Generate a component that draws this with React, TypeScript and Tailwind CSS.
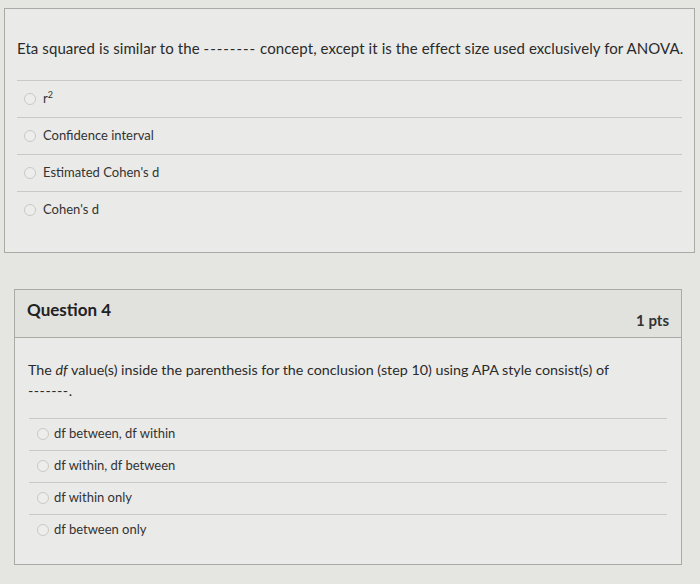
import { ReactNode } from 'react'

const font = { fontFamily: 'Lato, "Open Sans", sans-serif' }

function Radio() {
  return <span className="inline-block h-[12px] w-[12px] shrink-0 rounded-full border border-[#c9c9c6] bg-[#ededeb]" />
}

function Option({ children, row }: { children: ReactNode; row: string }) {
  return (
    <div className={`flex items-center border-t border-[#c9c9c6] ${row}`}>
      <Radio />
      <span className="text-[13px] text-[#333]">{children}</span>
    </div>
  )
}

export default function App() {
  return (
    <div className="h-[584px] w-[700px] overflow-hidden bg-[#e5e5e2] pt-[8px]" style={font}>
      {/* Previous question (card continues above the viewport) */}
      <div className="ml-[4px] w-[691px] border border-[#a9a9a6] bg-[#eaeae8]">
        <div className="whitespace-nowrap px-[12px] pt-[28px] pb-[20px] text-[15px] tracking-[0.08px] text-[#2b2b2b]">
          Eta squared is similar to the <span className="tracking-[1px]">--------</span> concept, except it is the effect size used exclusively for ANOVA.
        </div>
        <div className="mx-[12px] pb-[24px]">
          <Option row="h-[37px] pl-[7px] gap-[7px]">
            r<sup className="text-[9px]">2</sup>
          </Option>
          <Option row="h-[37px] pl-[7px] gap-[7px]">Confidence interval</Option>
          <Option row="h-[37px] pl-[7px] gap-[7px]">Estimated Cohen&apos;s d</Option>
          <Option row="h-[37px] pl-[7px] gap-[7px]">Cohen&apos;s d</Option>
        </div>
      </div>

      {/* Question 4 */}
      <div className="mt-[36px] ml-[14px] w-[668px] border border-[#a9a9a6] bg-[#eaeae8]">
        <div className="flex h-[48px] items-center justify-between border-b border-[#a9a9a6] bg-[#e1e1de] px-[12px]">
          <span className="mb-[6px] text-[17px] font-bold text-[#222]">Question 4</span>
          <span className="mt-[14px] text-[15px] font-bold text-[#333]">1 pts</span>
        </div>
        <div className="px-[13px] pt-[21px] pb-[17px] text-[14.3px] leading-[21px] text-[#2b2b2b]">
          <div>
            The <i>df</i> value(s) inside the parenthesis for the conclusion (step 10) using APA style consist(s) of
          </div>
          <div className="tracking-[0.5px]">-------.</div>
        </div>
        <div className="mx-[14px] pb-[18px]">
          <Option row="h-[32px] pl-[8px] gap-[5px]">df between, df within</Option>
          <Option row="h-[32px] pl-[8px] gap-[5px]">df within, df between</Option>
          <Option row="h-[32px] pl-[8px] gap-[5px]">df within only</Option>
          <Option row="h-[32px] pl-[8px] gap-[5px]">df between only</Option>
        </div>
      </div>
    </div>
  )
}
